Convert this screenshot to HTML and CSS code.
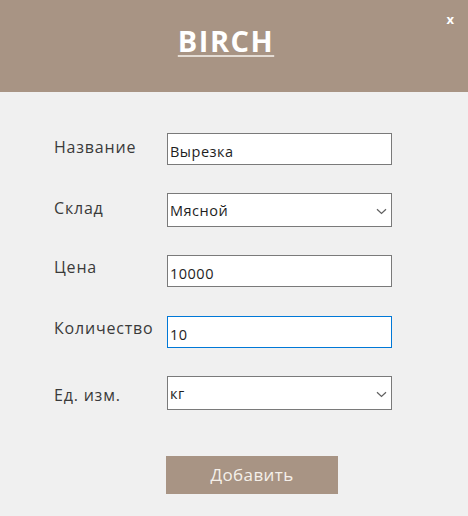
FILE: index.html
```html
<!DOCTYPE html>
<html lang="ru">
<head>
<meta charset="utf-8">
<title>BIRCH</title>
<link rel="stylesheet" href="styles.css">
</head>
<body>
<div class="window">
  <header class="header">
    <h1 class="title">BIRCH</h1>
    <span class="close">x</span>
  </header>
  <form class="form">
    <label class="label">Название</label>
    <input class="field" type="text" value="Вырезка">

    <label class="label">Склад</label>
    <div class="select-wrap">
      <div class="select">Мясной</div>
      <svg class="chevron" width="11" height="7" viewBox="0 0 11 7"><path d="M1 1.2 L5.5 5.5 L10 1.2" fill="none" stroke="#606060" stroke-width="1.2"/></svg>
    </div>

    <label class="label label-up">Цена</label>
    <input class="field" type="text" value="10000">

    <label class="label label-up">Количество</label>
    <input class="field field-focus" type="text" value="10">

    <label class="label label-down">Ед. изм.</label>
    <div class="select-wrap">
      <div class="select">кг</div>
      <svg class="chevron" width="11" height="7" viewBox="0 0 11 7"><path d="M1 1.2 L5.5 5.5 L10 1.2" fill="none" stroke="#606060" stroke-width="1.2"/></svg>
    </div>

    <span></span>
    <button class="submit" type="button">Добавить</button>
  </form>
</div>
</body>
</html>
```
FILE: styles.css
```css
* { box-sizing: border-box; }
html, body {
  margin: 0;
  padding: 0;
  background: #f0f0f0;
  font-family: "Open Sans", "Noto Sans", "Liberation Sans", sans-serif;
}
.window {
  width: 468px;
  height: 516px;
  background: #f0f0f0;
}
.header {
  position: relative;
  height: 92px;
  background: #a89484;
  display: flex;
  justify-content: center;
  padding-right: 16px;
  padding-top: 21px;
}
.title {
  margin: 0;
  font-size: 29px;
  font-weight: 700;
  line-height: 40px;
  color: #ffffff;
  letter-spacing: 1.5px;
  text-decoration: underline;
  text-decoration-color: #e4dcd4;
  text-decoration-thickness: 2px;
  text-underline-offset: 3px;
}
.close {
  position: absolute;
  top: 9px;
  right: 14px;
  font-size: 13px;
  font-weight: 700;
  color: #ffffff;
  line-height: 20px;
}
.form {
  display: grid;
  grid-template-columns: 113px 225px;
  grid-auto-rows: 34px;
  row-gap: 27px;
  align-items: center;
  padding: 40px 0 0 54px;
}
.label {
  font-size: 16px;
  letter-spacing: 0.8px;
  color: #3a3a3a;
  margin-top: -5px;
}
.label-up { margin-top: -8px; }
.label-down { margin-top: 4px; }
.field {
  height: 32px;
  width: 225px;
  border: 1px solid #7a7a7a;
  background: #ffffff;
  font-family: inherit;
  font-size: 14.5px;
  letter-spacing: 0.5px;
  color: #1e1e1e;
  padding: 4px 2px 0;
  margin: 0;
  outline: none;
}
.field-focus { border-color: #0078d7; }
.select-wrap {
  position: relative;
  height: 34px;
}
.select {
  height: 34px;
  border: 1px solid #7a7a7a;
  background: #ffffff;
  font-size: 14.5px;
  letter-spacing: 0.5px;
  color: #1e1e1e;
  padding: 7px 2px 0;
}
.chevron {
  position: absolute;
  right: 5px;
  top: 15px;
}
.submit {
  grid-column: 2;
  margin-top: 42px;
  width: 172px;
  height: 38px;
  border: none;
  background: #a89484;
  color: #f5f0ea;
  font-family: inherit;
  font-size: 17px;
  letter-spacing: 0.4px;
  padding: 0 0 2px;
  justify-self: start;
  margin-left: -1px;
}
```
